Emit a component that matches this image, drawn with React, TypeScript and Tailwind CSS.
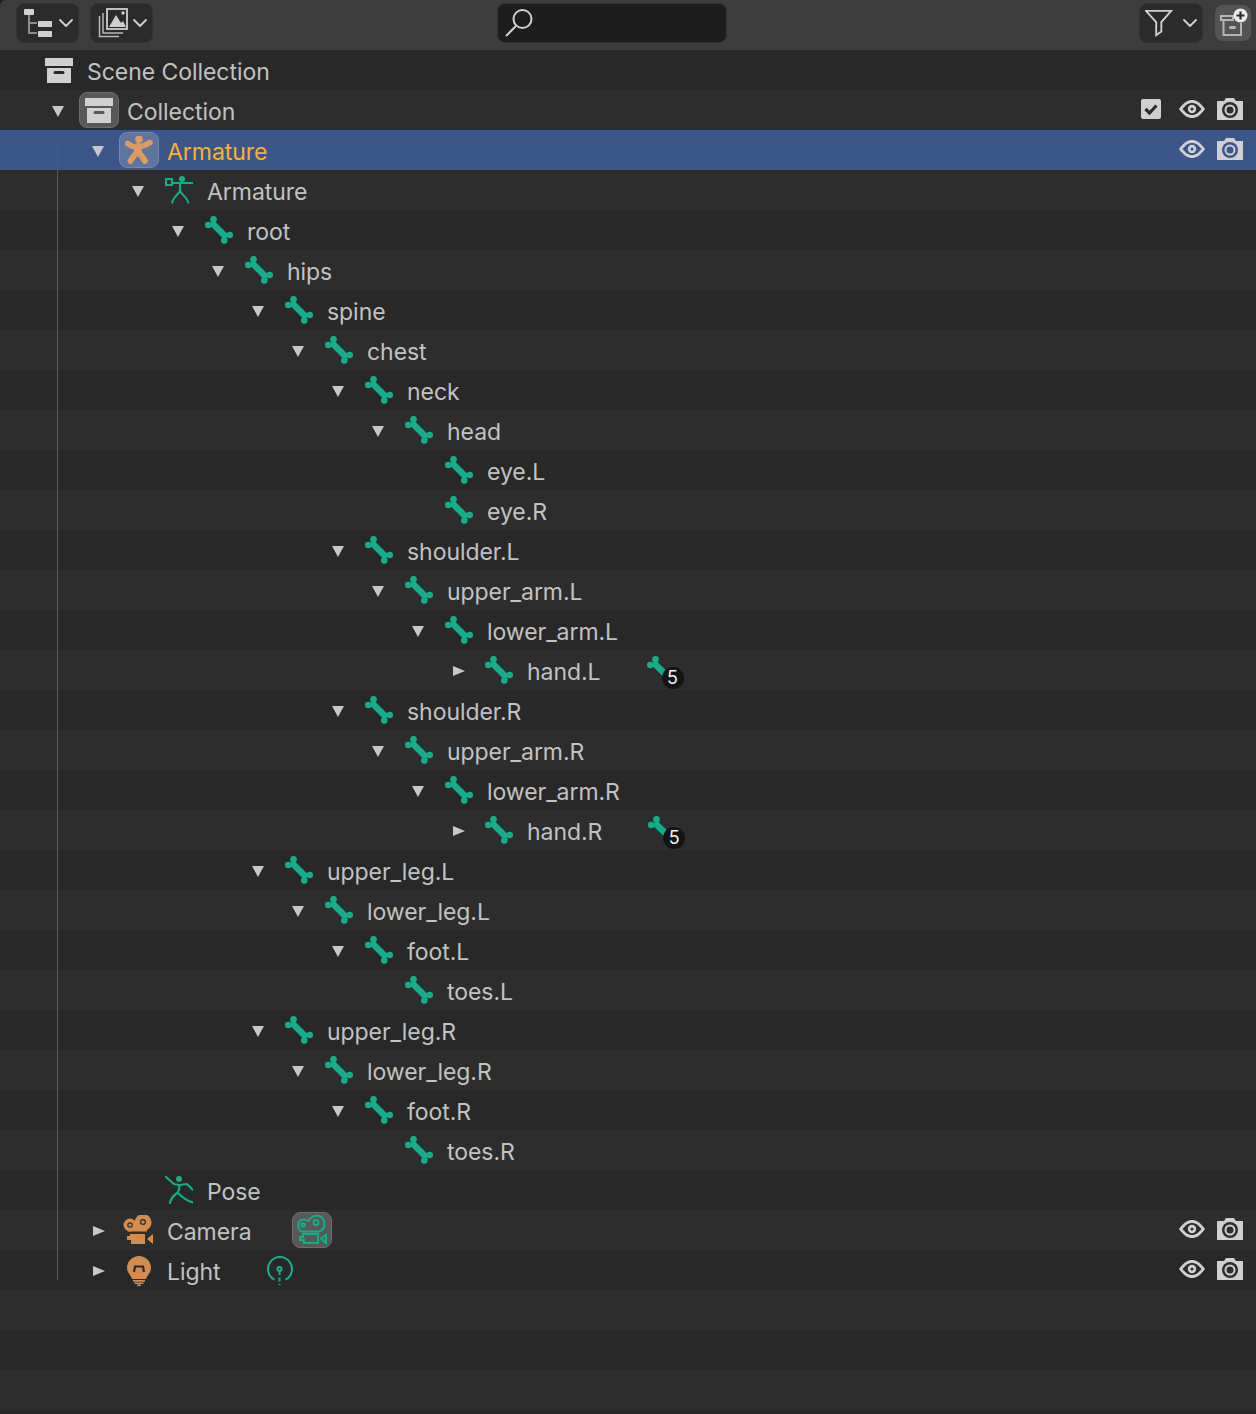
import React from 'react';

const TEAL = '#12b08a';
const ORANGE = '#d38b4e';
const LIGHT = '#d0d0d0';

const Bone: React.FC<{ className?: string }> = ({ className }) => (
  <svg viewBox="0 0 28 28" className={className ?? 'w-7 h-7'} fill={TEAL}>
    <circle cx="8.500" cy="3.400" r="3.300" />
    <circle cx="3.300" cy="9" r="3.300" />
    <circle cx="24.700" cy="19" r="3.300" />
    <circle cx="19.300" cy="24.600" r="3.300" />
    <path d="M6.500 6.500 L21.500 21.500" stroke={TEAL} strokeWidth="6.500" />
  </svg>
);

const CollectionIcon = () => (
  <svg viewBox="0 0 28 28" className="w-7 h-7">
    <path d="M0 2h28v8H0z" fill={LIGHT} />
    <path fillRule="evenodd" clipRule="evenodd" d="M2 12h24v15H2z M10 15a1.500 1.500 0 0 0 0 3h8a1.500 1.500 0 0 0 0-3z" fill={LIGHT} />
  </svg>
);

const ArmatureObject = () => (
  <svg viewBox="0 0 28 28" className="w-7 h-7" fill="none" stroke="#df9a62" strokeWidth="5.500" strokeLinecap="round" strokeLinejoin="round">
    <circle cx="14" cy="3.300" r="3.800" fill="#df9a62" stroke="none" />
    <path d="M2.500 7.500 Q8 11.500 13 11 Q18 10.500 25 6.500" />
    <path d="M13 11 V16" strokeWidth="8" />
    <path d="M13 16 Q8 20 5.500 25" strokeWidth="6" />
    <path d="M13 16 Q17 20 20 25" strokeWidth="6" />
  </svg>
);

const ArmatureData = () => (
  <svg viewBox="0 0 28 28" className="w-7 h-7" fill="none" stroke={TEAL} strokeWidth="2">
    <rect x="1" y="3" width="6" height="6" />
    <circle cx="17" cy="3" r="3" fill={TEAL} stroke="none" />
    <path d="M7 7 H28" />
    <path d="M15 7 V14 C15 18 8 20 7 27.500" />
    <path d="M15 14 C15 18 22 20 23.500 27.500" />
  </svg>
);

const PoseIcon = () => (
  <svg viewBox="0 0 28 28" className="w-7 h-7" fill="none" stroke={TEAL} strokeWidth="2.200" strokeLinecap="round" strokeLinejoin="round">
    <circle cx="14" cy="3" r="3" fill={TEAL} stroke="none" />
    <path d="M1 1 L9 8 L14 9 L22 8 L28 14" />
    <path d="M14 9 C15 13 13 17 11 18 C8 20 6 22 5 27" />
    <path d="M13 17 C17 21 21 25 28 26.500" />
  </svg>
);

const CameraObject = () => (
  <svg viewBox="0 0 32 30" className="w-8 h-[30px]">
    <circle cx="7" cy="10" r="6.500" fill={ORANGE} />
    <circle cx="20" cy="7.500" r="8.500" fill={ORANGE} />
    <path d="M5 12 H24 V16.500 H5z" fill={ORANGE} />
    <circle cx="7" cy="10" r="2.200" fill={ORANGE} stroke="#2b2b2b" strokeWidth="1.200" />
    <circle cx="20" cy="7" r="2.400" fill={ORANGE} stroke="#2b2b2b" strokeWidth="1.200" />
    <path d="M4 21h3v-2h15v10H8v-4H4z M24 24 L30 19 V29z" fill={ORANGE} />
  </svg>
);

const CameraData = () => (
  <svg viewBox="0 0 32 30" className="w-8 h-[30px]" fill="none" stroke={TEAL} strokeWidth="2">
    <path d="M7 16.500 C1 16.500 0 5 7 4.500 C10 4.500 11 6 12.500 6 C14 2 19 0 23 1 C29 3 30 12 26 15 C25 16 24 16.500 22 16.500z" />
    <circle cx="7" cy="10" r="1.800" />
    <circle cx="20" cy="7.500" r="2.500" />
    <path d="M4 22h3v-3h15v9H8v-3H4z" />
    <path d="M25 23.500 L30 20 V28z" />
  </svg>
);

const LightObject = () => (
  <svg viewBox="0 0 28 32" className="w-7 h-8">
    <path d="M14 2 A12 12 0 0 1 26 14 C26 19 22 21 21 25 H7 C6 21 2 19 2 14 A12 12 0 0 1 14 2z" fill={ORANGE} />
    <path d="M9 18 L10 12.500 H18 L19 18" stroke="#2b2b2b" strokeWidth="2.200" fill="none" />
    <path d="M8 26h12v1.800H8z M9.500 28.500h9v1.500h-9z M12 30.500h4v1.500h-4z" fill={ORANGE} />
  </svg>
);

const LightData = () => (
  <svg viewBox="0 0 28 30" className="w-7 h-[30px]" fill="none" stroke={TEAL} strokeWidth="2">
    <path d="M8.500 24.700 A12 12 0 1 1 19.500 24.700" />
    <circle cx="13.500" cy="14" r="2" />
    <path d="M13.500 16 V30" strokeDasharray="4 2.500" />
  </svg>
);

const Eye: React.FC<{ bg: string }> = ({ bg }) => (
  <svg viewBox="0 0 26 18" className="w-[26px] h-[18px]">
    <path d="M0 9 C5 2 9 0 13 0 C17 0 21 2 26 9 C21 16 17 18 13 18 C9 18 5 16 0 9z" fill={LIGHT} />
    <path d="M3.500 9 C7 4.500 10 3 13 3 C16 3 19 4.500 22.500 9 C19 13.500 16 15 13 15 C10 15 7 13.500 3.500 9z" fill={bg} />
    <circle cx="13" cy="9" r="4.200" fill={LIGHT} />
    <circle cx="13" cy="9" r="1.500" fill={bg} />
  </svg>
);

const Render: React.FC<{ bg: string }> = ({ bg }) => (
  <svg viewBox="0 0 26 22" className="w-[26px] h-[22px]">
    <path d="M0 3h7l2-3h8l2 3h7v19H0z" fill={LIGHT} />
    <circle cx="13" cy="12" r="8" fill={bg} />
    <circle cx="13" cy="12" r="5.500" fill={LIGHT} />
    <circle cx="13" cy="12" r="3.500" fill={bg} />
  </svg>
);

const Check = () => (
  <svg viewBox="0 0 20 20" className="w-5 h-5">
    <rect width="20" height="20" rx="2" fill={LIGHT} />
    <path d="M4.500 10 L8.500 14 L15.500 6.500" stroke="#2b2b2b" strokeWidth="3.200" fill="none" />
  </svg>
);

const Chevron = () => (
  <svg viewBox="0 0 14 8" className="w-3.5 h-2" fill="none" stroke={LIGHT} strokeWidth="1.800" strokeLinecap="round" strokeLinejoin="round">
    <path d="M1 1 L7 7 L13 1" />
  </svg>
);

const BoneCount = () => (
  <span className="relative flex w-7 h-7 ml-[46px]">
    <Bone />
    <span className="absolute left-[15px] top-[11px] w-[22px] h-[22px] rounded-full bg-[#141414] text-[#f0f0f0] text-[18px] leading-[22px] text-center">5</span>
  </span>
);

type Row = {
  label: string;
  depth: number;
  arrow?: 'down' | 'right';
  icon: React.ReactNode;
  active?: boolean;
  selected?: boolean;
  tail?: React.ReactNode;
  check?: boolean;
  vis?: boolean;
};

const b = (label: string, depth: number, arrow?: 'down' | 'right', tail?: React.ReactNode): Row => ({
  label,
  depth,
  arrow,
  tail,
  icon: <Bone />,
});

const rows: Row[] = [
  { label: 'Scene Collection', depth: 0, icon: <CollectionIcon /> },
  { label: 'Collection', depth: 1, arrow: 'down', icon: <CollectionIcon />, active: true, check: true, vis: true },
  { label: 'Armature', depth: 2, arrow: 'down', icon: <ArmatureObject />, active: true, selected: true, vis: true },
  { label: 'Armature', depth: 3, arrow: 'down', icon: <ArmatureData /> },
  b('root', 4, 'down'),
  b('hips', 5, 'down'),
  b('spine', 6, 'down'),
  b('chest', 7, 'down'),
  b('neck', 8, 'down'),
  b('head', 9, 'down'),
  b('eye.L', 10),
  b('eye.R', 10),
  b('shoulder.L', 8, 'down'),
  b('upper_arm.L', 9, 'down'),
  b('lower_arm.L', 10, 'down'),
  b('hand.L', 11, 'right', <BoneCount />),
  b('shoulder.R', 8, 'down'),
  b('upper_arm.R', 9, 'down'),
  b('lower_arm.R', 10, 'down'),
  b('hand.R', 11, 'right', <BoneCount />),
  b('upper_leg.L', 6, 'down'),
  b('lower_leg.L', 7, 'down'),
  b('foot.L', 8, 'down'),
  b('toes.L', 9),
  b('upper_leg.R', 6, 'down'),
  b('lower_leg.R', 7, 'down'),
  b('foot.R', 8, 'down'),
  b('toes.R', 9),
  { label: 'Pose', depth: 3, icon: <PoseIcon /> },
  {
    label: 'Camera',
    depth: 2,
    arrow: 'right',
    icon: <CameraObject />,
    vis: true,
    tail: (
      <span className="flex items-center justify-center w-10 h-9 ml-10 rounded-[8px] bg-[#585858] border border-[#6c6c6c]">
        <CameraData />
      </span>
    ),
  },
  {
    label: 'Light',
    depth: 2,
    arrow: 'right',
    icon: <LightObject />,
    vis: true,
    tail: (
      <span className="flex items-center justify-center w-7 ml-[45px]">
        <LightData />
      </span>
    ),
  },
];

const Arrow: React.FC<{ dir?: 'down' | 'right' }> = ({ dir }) => (
  <span className="flex w-5 items-center justify-center">
    {dir === 'down' && <span className="mt-[3px] w-0 h-0 border-x-[6px] border-x-transparent border-t-[11px] border-t-[#c8c8c8]" />}
    {dir === 'right' && <span className="mt-[2px] ml-[2px] w-0 h-0 border-y-[5.5px] border-y-transparent border-l-[12px] border-l-[#c8c8c8]" />}
  </span>
);

const TreeRow: React.FC<{ row: Row; index: number }> = ({ row, index }) => {
  const bg = row.selected ? 'bg-[#3b5689]' : index % 2 === 0 ? 'bg-[#282828]' : 'bg-[#2d2d2d]';
  const iconBg = row.selected ? '#3b5689' : '#2d2d2d';
  return (
    <div className={`flex items-center h-10 ${bg}`} style={{ paddingLeft: 8 + row.depth * 40 }}>
      <Arrow dir={row.arrow} />
      <span
        className={`flex items-center justify-center w-10 h-9 ml-[11px] rounded-[8px] ${
          row.active ? (row.selected ? 'bg-[#5f749f] border border-[#7687ac]' : 'bg-[#585858] border border-[#6c6c6c]') : ''
        }`}
      >
        {row.icon}
      </span>
      <span className={`ml-2 mt-1 text-[23px] tracking-[-0.05px] leading-9 ${row.selected ? 'text-[#ffaf29]' : 'text-[#c2c2c2]'}`}>{row.label}</span>
      {row.tail}
      <span className="ml-auto flex items-center mb-0.5">
        {row.check && <span className="mr-[18px]"><Check /></span>}
        {row.vis && (
          <span className="flex items-center gap-3 pr-[13px]">
            <Eye bg={iconBg} />
            <Render bg={iconBg} />
          </span>
        )}
      </span>
    </div>
  );
};

const Dropdown: React.FC<{ children: React.ReactNode; className: string }> = ({ children, className }) => (
  <div className={`flex items-center h-10 rounded-[8px] bg-[#2b2b2b] border-[1.5px] border-[#323232] ${className}`}>{children}</div>
);

export default function App() {
  const emptyRows = [31, 32, 33, 34];
  return (
    <div className="relative h-[1414px] bg-[#1d1d1d] font-['Inter','Liberation_Sans',sans-serif] overflow-hidden">
      <header className="flex items-center h-[50px] pl-4 pr-[5px] pb-1 bg-[#3d3d3d] rounded-tl-[6px]">
        <Dropdown className="w-[63px] pl-[6px] gap-[6px]">
          <svg viewBox="0 0 30 30" className="w-[30px] h-[30px]">
            <rect x="1" y="1" width="10" height="6" rx="1" fill={LIGHT} />
            <path d="M6 7 V25 H14 M6 15 H14" stroke="#8c8c8c" strokeWidth="2" fill="none" />
            <rect x="15" y="13" width="14" height="6" rx="0.500" fill={LIGHT} />
            <rect x="15" y="23" width="14" height="6" rx="0.500" fill={LIGHT} />
          </svg>
          <Chevron />
        </Dropdown>
        <Dropdown className="w-[63px] ml-[11px] pl-[7px] gap-[5px]">
          <svg viewBox="0 0 30 30" className="w-[30px] h-[30px]" fill="none">
            <path d="M1.500 8 V28.500 H21 M5 5 V25 H25" stroke="#b8b8b8" strokeWidth="1.500" />
            <rect x="9" y="1" width="20" height="20" fill="#2b2b2b" stroke={LIGHT} strokeWidth="1.800" />
            <path d="M11 19 L18 7 L23 15 L25 13 L28 19z" fill={LIGHT} />
            <circle cx="25" cy="5" r="1.700" fill={LIGHT} />
          </svg>
          <Chevron />
        </Dropdown>
        <div className="flex items-center w-[230px] h-10 ml-[344px] pl-[6px] rounded-[8px] bg-[#1d1d1d] border-[1.5px] border-[#323232]">
          <svg viewBox="0 0 30 30" className="w-[30px] h-[30px]" fill="none" stroke={LIGHT} strokeWidth="2">
            <circle cx="18.500" cy="11" r="9" />
            <path d="M12 18 L2 28" />
          </svg>
        </div>
        <Dropdown className="w-[64px] ml-auto pl-[5px] gap-[10px]">
          <svg viewBox="0 0 30 30" className="w-7 h-7" fill="none" stroke={LIGHT} strokeWidth="2">
            <path d="M1 2 H28 L17.500 14 V24 L12 28 V14z" />
          </svg>
          <Chevron />
        </Dropdown>
        <div className="relative flex items-center justify-center w-9 h-9 ml-3 rounded-[8px] bg-[#545454]">
          <svg viewBox="0 0 34 32" className="w-[34px] h-8">
            <path d="M5 9 H17 V13 H5z M7.500 13 V28 H25 V16" stroke="#b4b4b4" strokeWidth="2" fill="none" />
            <rect x="13" y="19" width="7" height="3" rx="1.500" fill="#b4b4b4" />
            <circle cx="24.500" cy="8.500" r="7" fill="#ececec" />
            <path d="M24.500 4.500 V12.500 M20.500 8.500 H28.500" stroke="#2b2b2b" strokeWidth="2.200" />
          </svg>
        </div>
      </header>
      <main>
        {rows.map((row, i) => (
          <TreeRow key={i} row={row} index={i} />
        ))}
        {emptyRows.map((n) => (
          <div key={n} className={`h-10 ${n % 2 === 0 ? 'bg-[#282828]' : 'bg-[#2d2d2d]'}`} />
        ))}
      </main>
      <div className="absolute left-[57px] top-[140px] w-px h-[1140px] bg-[#5a5a5a]" />
    </div>
  );
}
